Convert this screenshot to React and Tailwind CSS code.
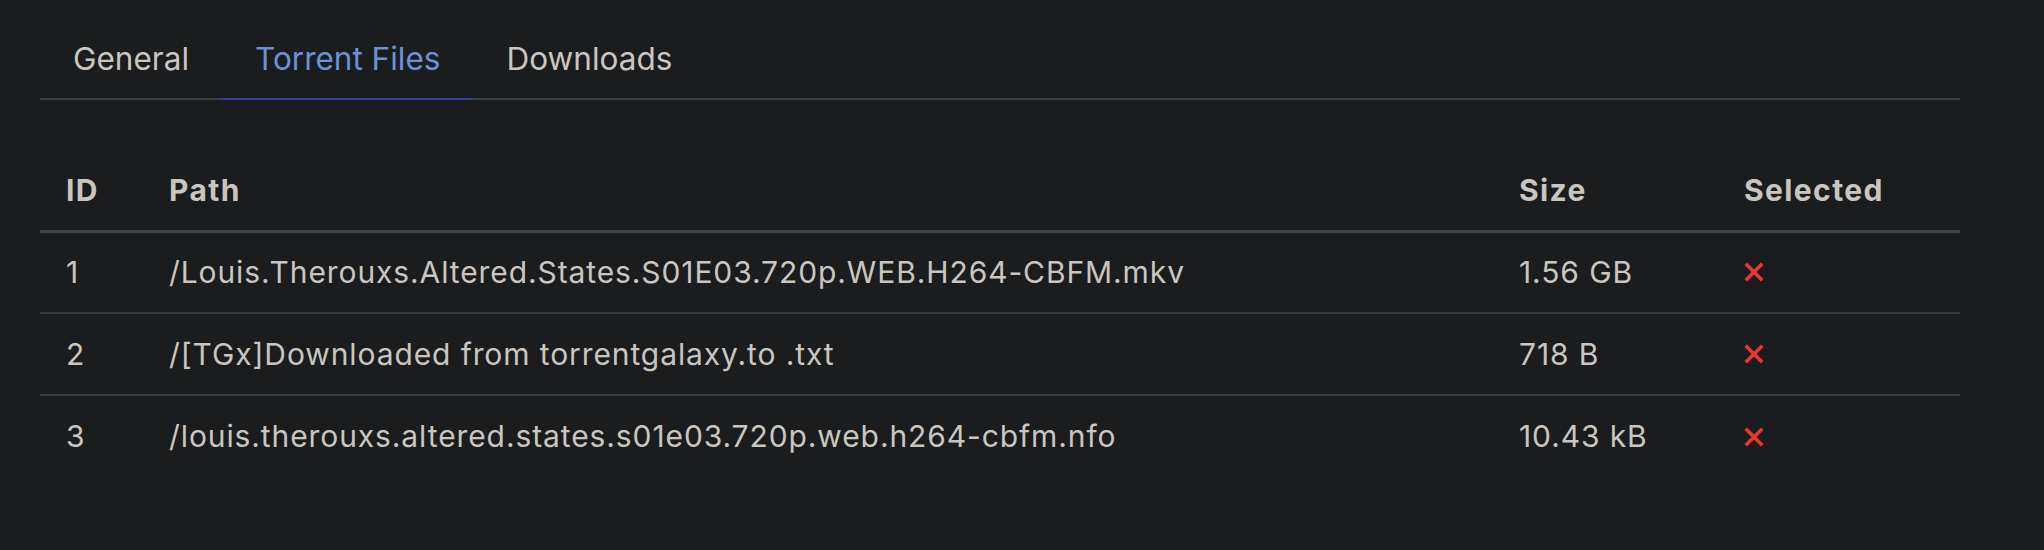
import React, { useState } from "react";

const files = [
  { id: 1, path: "/Louis.Therouxs.Altered.States.S01E03.720p.WEB.H264-CBFM.mkv", size: "1.56 GB", selected: false },
  { id: 2, path: "/[TGx]Downloaded from torrentgalaxy.to .txt", size: "718 B", selected: false },
  { id: 3, path: "/louis.therouxs.altered.states.s01e03.720p.web.h264-cbfm.nfo", size: "10.43 kB", selected: false },
];

const tabs = ["General", "Torrent Files", "Downloads"];

const CrossIcon = () => (
  <svg width="20" height="20" viewBox="0 0 20 20" className="text-[#e8372c]">
    <path d="M3 3L17 17M17 3L3 17" stroke="currentColor" strokeWidth="3.6" strokeLinecap="square" />
  </svg>
);

const App = () => {
  const [active, setActive] = useState("Torrent Files");

  return (
    <div className="min-h-[550px] bg-[#1b1c1e] pt-[19px] pl-[40px] text-[#c9c6c0] font-['Inter',sans-serif]">
      <div className="w-[1920px]">
        {/* Tabs */}
        <div className="flex border-b-2 border-[#3b3c3f]">
          {tabs.map((tab) => (
            <button
              key={tab}
              type="button"
              onClick={() => setActive(tab)}
              className={`h-[81px] px-[33px] -mb-[2px] text-[31.5px] border-b-2 ${
                active === tab
                  ? "text-[#6a93d6] border-[#2f3e9f]"
                  : "text-[#c9c6c0] border-transparent"
              }`}
            >
              {tab}
            </button>
          ))}
        </div>

        {/* Files table */}
        <table className="mt-[47px] w-full border-collapse text-left">
          <thead>
            <tr className="border-b-[3px] border-[#404245] text-[30px] font-bold tracking-[1.4px]">
              <th className="h-[84px] w-[103px] pl-[26px] pt-[4px]">ID</th>
              <th className="h-[84px] pl-[26px] pt-[4px]">Path</th>
              <th className="h-[84px] w-[225px] pl-[26px] pt-[4px]">Size</th>
              <th className="h-[84px] w-[242px] pl-[26px] pt-[4px]">Selected</th>
            </tr>
          </thead>
          <tbody>
            {files.map((f, i) => (
              <tr
                key={f.id}
                className={`text-[30px] tracking-[0.9px] ${i < files.length - 1 ? "border-b-2 border-[#3a3b3e]" : ""}`}
              >
                <td className="h-[82px] pl-[26px]">{f.id}</td>
                <td className="h-[82px] pl-[26px]">{f.path}</td>
                <td className="h-[82px] pl-[26px]">{f.size}</td>
                <td className="h-[82px] pl-[26px]">
                  <CrossIcon />
                </td>
              </tr>
            ))}
          </tbody>
        </table>
      </div>
    </div>
  );
};

export default App;
